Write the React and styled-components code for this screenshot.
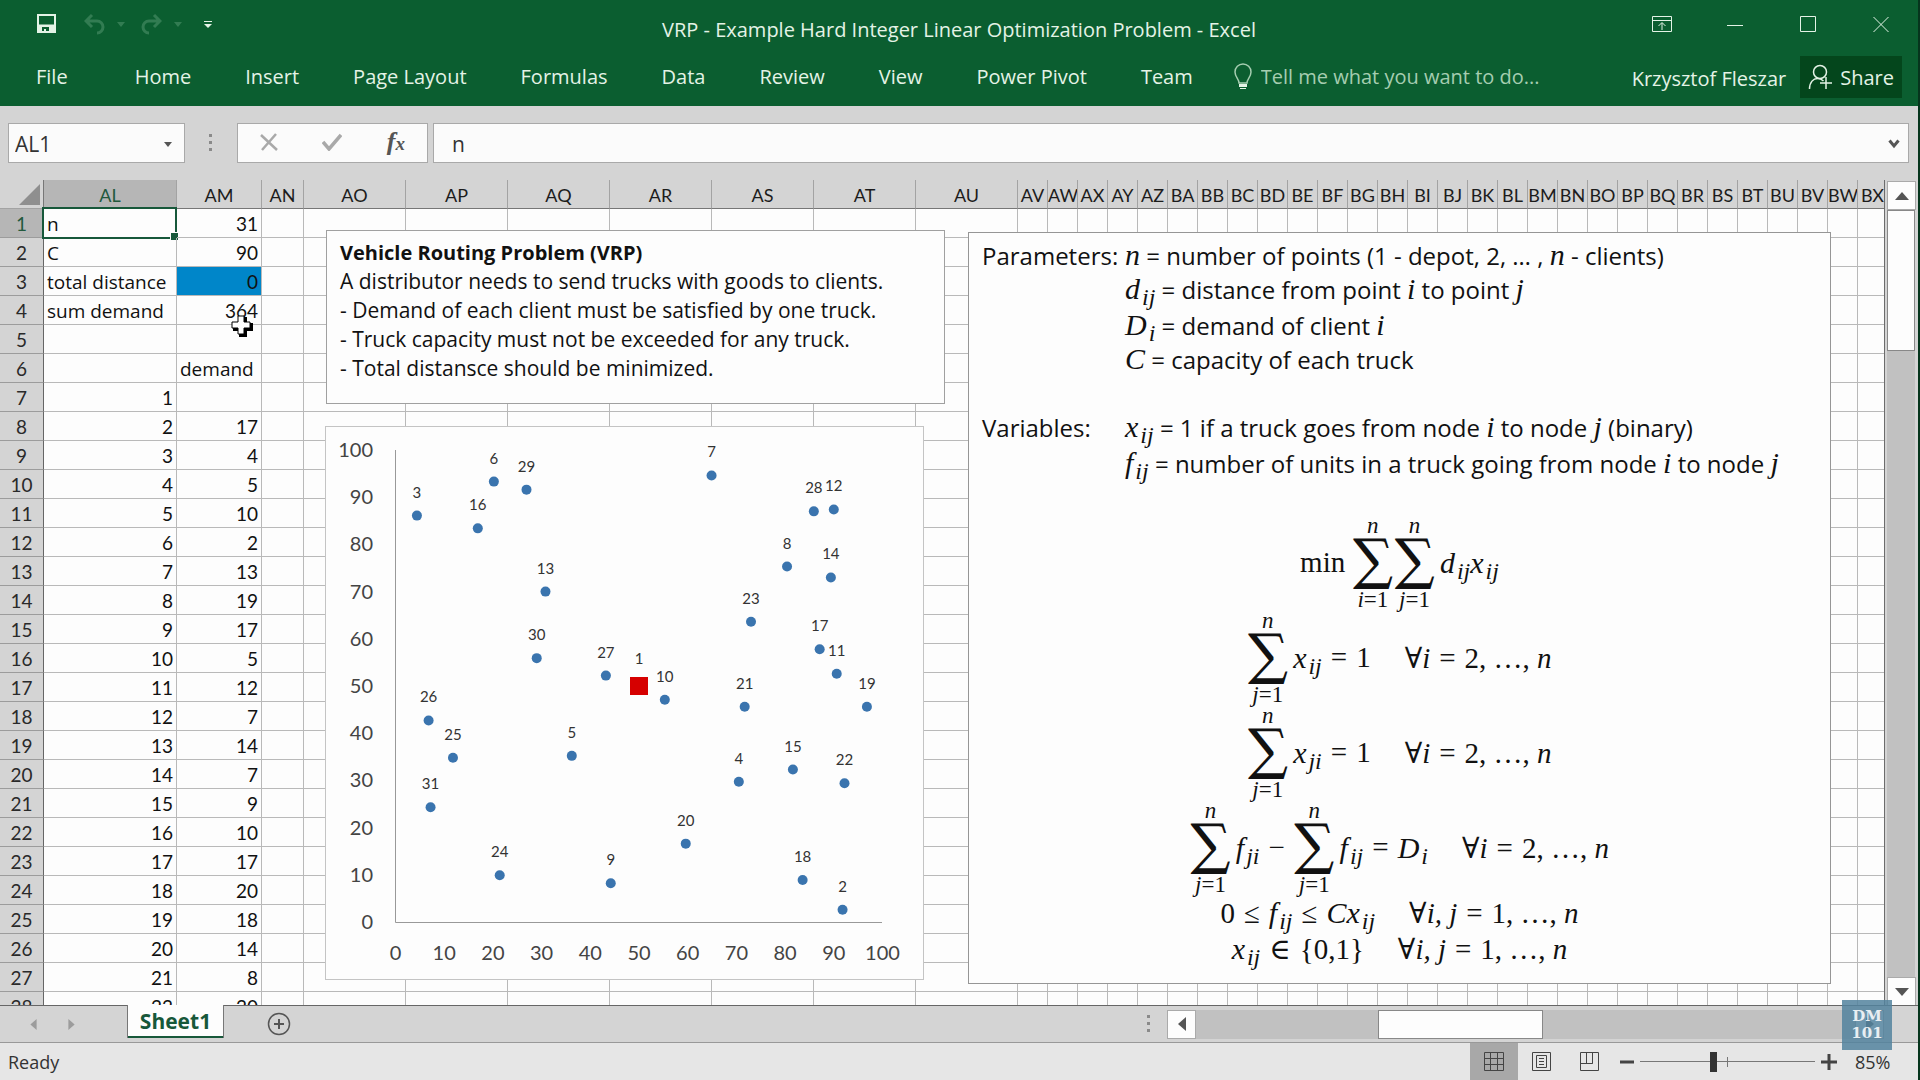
import React, { useState } from 'react';
import styled, { createGlobalStyle } from 'styled-components';

const ui = `'Open Sans', 'Noto Sans', sans-serif`;
const cell = `Lato, 'Open Sans', sans-serif`;
const math = `'Liberation Serif', 'DejaVu Serif', serif`;

const Global = createGlobalStyle`
  * {
    box-sizing: border-box;
  }
  body {
    margin: 0;
    overflow: hidden;
    font-family: ${ui};
  }
  button, input {
    font: inherit;
    color: inherit;
    border: none;
    background: none;
    padding: 0;
    margin: 0;
  }
  button {
    cursor: pointer;
  }
`;

const Window = styled.div`
  display: flex;
  flex-direction: column;
  height: 100vh;
  background: #d4d4d4;
  border-right: 2px solid #06351d;
`;

const Header = styled.header`
  height: 106px;
  background: #0b5e30;
  color: #e4f3e6;
  font-size: 20px;
`;

const TitleBar = styled.div`
  display: grid;
  grid-template-columns: 1fr auto 1fr;
  height: 56px;
`;

const QuickAccess = styled.div`
  display: flex;
  align-items: flex-start;
  padding: 13px 0 0 36px;
`;

const QuickButton = styled.button`
  display: flex;
  height: 22px;
  margin-right: ${(props) => props.$gap || 0}px;
  opacity: ${(props) => (props.disabled ? 0.25 : 1)};
`;

const DocTitle = styled.h1`
  margin: 0;
  padding-top: 15px;
  font-size: 20px;
  font-weight: 400;
  line-height: 30px;
`;

const WindowButtons = styled.div`
  display: flex;
  justify-content: flex-end;
  padding-right: 1px;
`;

const WindowButton = styled.button`
  display: flex;
  justify-content: center;
  width: 73px;
  height: 48px;
  padding-top: 16px;
`;

const Ribbon = styled.nav`
  display: flex;
  align-items: center;
  height: 42px;
  padding: 0 16px 0 9px;
`;

const RibbonTab = styled.button`
  padding: 0 ${(props) => (props.$file ? 40 : 27)}px 0 27px;
  line-height: 42px;
  white-space: nowrap;
`;

const TellMe = styled.label`
  display: flex;
  flex: 1;
  align-items: center;
  gap: 8px;
  padding-left: 13px;

  input {
    flex: 1;
    min-width: 0;
    line-height: 28px;
    outline: none;
  }
  input::placeholder {
    color: #a5cdb0;
    opacity: 1;
  }
`;

const User = styled.span`
  padding: 2px 14px 0 0;
  white-space: nowrap;
`;

const Share = styled.button`
  display: flex;
  align-items: center;
  gap: 8px;
  height: 42px;
  padding: 0 8px;
  background: #04461c;
`;

const FormulaBar = styled.div`
  display: flex;
  height: 74px;
  padding: 17px 9px 0 8px;
  color: #333;
  font-size: 21px;
`;

const BarBox = styled.div`
  display: flex;
  align-items: center;
  height: 40px;
  background: #fbfbfb;
  border: 1px solid #a9a9a9;
`;

const NameBox = styled(BarBox)`
  width: 177px;
  padding: 2px 12px 0 6px;

  input {
    flex: 1;
    min-width: 0;
    outline: none;
  }
`;

const BarDots = styled.div`
  display: flex;
  justify-content: center;
  align-items: center;
  width: 52px;
  height: 40px;
`;

const FxBox = styled(BarBox)`
  justify-content: space-between;
  width: 191px;
  margin-right: 5px;
  padding: 0 22px;
`;

const FormulaBox = styled(BarBox)`
  flex: 1;
  padding: 2px 8px 0 18px;

  input {
    flex: 1;
    outline: none;
  }
`;

const FxButton = styled.button`
  color: #555;
  font-family: ${math};
  font-size: 26px;
  font-style: italic;
  font-weight: 700;
  line-height: 30px;

  small {
    font-size: 19px;
  }
`;

const Body = styled.main`
  display: flex;
  flex: 1;
  min-height: 0;
`;

const Sheet = styled.div`
  position: relative;
  flex: 1;
  min-width: 0;
  overflow: hidden;
  background: #fdfdfd;
`;

const Grid = styled.table`
  width: 1888px;
  table-layout: fixed;
  border-collapse: separate;
  border-spacing: 0;
  color: #111;
  font-family: ${cell};
  font-size: 19px;
`;

const ColHead = styled.th`
  height: 29px;
  padding: 3px 0 0;
  overflow: hidden;
  background: ${(props) => (props.$active ? '#b6b6b6' : '#d4d4d4')};
  border-right: 1px solid #a3a3a3;
  border-bottom: 1px solid #777;
  color: ${(props) => (props.$active ? '#22593d' : '#1c1c1c')};
  font-size: 18px;
  font-weight: 400;
  line-height: 25px;
  white-space: nowrap;
`;

const Corner = styled.td`
  height: 29px;
  padding: 0 3px 3px 0;
  background: #d4d4d4;
  border-right: 1px solid #777;
  border-bottom: 1px solid #a3a3a3;
  vertical-align: bottom;

  svg {
    display: block;
    margin-left: auto;
  }
`;

const RowHead = styled.th`
  height: 29px;
  padding: 2px 0 0;
  background: ${(props) => (props.$active ? '#b6b6b6' : '#d4d4d4')};
  border-right: 1px solid #666;
  border-bottom: 1px solid #9c9c9c;
  color: ${(props) => (props.$active ? '#22593d' : '#2a2a2a')};
  font-weight: 400;
  line-height: 26px;
`;

const Cell = styled.td`
  position: relative;
  height: 29px;
  padding: 2px 3px 0;
  background: ${(props) => (props.$fill ? '#0086c9' : 'transparent')};
  border-right: 1px solid #b9b9b9;
  border-bottom: 1px solid #b9b9b9;
  font-family: ${(props) => (props.$text ? ui : 'inherit')};
  text-align: ${(props) => (props.$text ? 'left' : 'right')};
  line-height: 26px;
  white-space: nowrap;
`;

const Selection = styled.div`
  position: absolute;
  inset: -2px -1px -2px -2px;
  border: 2px solid #17583a;

  &::after {
    content: '';
    position: absolute;
    right: -3px;
    bottom: -3px;
    width: 7px;
    height: 7px;
    background: #17583a;
    border: solid #fdfdfd;
    border-width: 1px 0 0 1px;
  }
`;

const Cursor = styled.svg`
  position: absolute;
  left: 230px;
  top: 134px;
`;

/* objects floating over the grid */
const Floating = styled.section`
  position: absolute;
  left: ${(props) => props.$x}px;
  top: ${(props) => props.$y}px;
  background: #fdfdfd;
  border: 1px solid ${(props) => props.$line || '#a0a0a0'};
`;

const Note = styled(Floating)`
  width: 619px;
  height: 174px;
  padding: 7px 13px;
  color: #111;
  font-size: 21px;
  line-height: 29px;

  h2,
  p {
    margin: 0;
    white-space: nowrap;
  }
  h2 {
    font-size: 20px;
  }
  p {
    font-size: inherit;
  }
`;

const Chart = styled.svg`
  display: block;
  font-family: ${cell};
`;

const Model = styled(Floating)`
  width: 863px;
  height: 752px;
  padding: 6px 13px;
  color: #111;
  font-size: 24px;
`;

const Definitions = styled.div`
  display: grid;
  grid-template-columns: 143px 1fr;
  padding-bottom: 34px;
`;

const Def = styled.p`
  grid-column: 2;
  margin: 0;
  padding-bottom: ${(props) => (props.$deep ? 2 : 0)}px;
  line-height: 34px;
  white-space: nowrap;
`;

const DefLabel = styled.h3`
  grid-column: 1;
  margin: 0;
  font-size: inherit;
  font-weight: 400;
  line-height: 34px;
`;

const Var = styled.i`
  font-family: ${math};
  font-size: 30px;
  line-height: 1;

  sub {
    margin-left: 2px;
    font-size: 24px;
    line-height: 0;
    vertical-align: -6px;
  }
`;

const Equation = styled.div`
  display: flex;
  justify-content: center;
  align-items: center;
  height: ${(props) => (props.$sum ? 95 : 36)}px;
  font-family: ${math};
  font-size: 29px;
  white-space: pre;
`;

const Op = styled.span`
  margin: 0 9px;
`;

const ForAll = styled.span`
  margin-left: 34px;
`;

/* the sign has wide side bearings, so the boxes are pulled together */
const SumBox = styled.span`
  display: inline-flex;
  flex-direction: column;
  align-items: center;
  margin: 0 2px 0 -3px;

  & + & {
    margin-left: -7px;
  }
`;

const Limit = styled.span`
  font-size: 23px;
  line-height: 20px;
`;

const SumSign = styled.span`
  font-family: 'DejaVu Math TeX Gyre', 'DejaVu Serif', serif;
  font-size: 48px;
  line-height: 54px;
`;

const VScroll = styled.div`
  display: flex;
  flex-direction: column;
  width: 34px;
  margin-bottom: -1px;
  padding: 1px 3px 0 2px;
  border-left: 1px solid #6c6c6c;
`;

const ScrollButton = styled.button`
  display: flex;
  flex: none;
  justify-content: center;
  align-items: center;
  width: 29px;
  height: 29px;
  background: #fdfdfd;
  border: 1px solid #aaa;
`;

const VTrack = styled.div`
  flex: 1;
  background: #c1c1c1;
`;

const VThumb = styled.div`
  height: 141px;
  background: #fdfdfd;
  border: 1px solid #888;
`;

const TabBar = styled.div`
  position: relative;
  display: flex;
  height: 38px;
  border-top: 1px solid #666;
  border-bottom: 1px solid #999;
`;

const TabNav = styled.div`
  display: flex;
  align-items: center;
  gap: 27px;
  width: 127px;
  padding-left: 28px;

  button {
    display: flex;
  }
`;

const SheetTab = styled.button`
  width: 97px;
  height: 33px;
  margin-top: -1px;
  padding-bottom: 2px;
  background: #fdfdfd;
  border: solid #777;
  border-width: 0 1px;
  box-shadow: inset 0 -2px #17583a;
  color: #17583a;
  font-size: 21px;
  font-weight: 700;
  line-height: 28px;
`;

const AddSheet = styled.button`
  display: flex;
  align-items: center;
  margin-left: 43px;
`;

const HScroll = styled.div`
  display: flex;
  align-items: center;
  width: 737px;
  margin: 0 34px 0 auto;
`;

const BarSpace = styled.span`
  width: 16px;
`;

const HTrack = styled.div`
  display: flex;
  flex: 1;
  height: 29px;
  padding-left: 182px;
  background: #c1c1c1;
`;

const HThumb = styled.div`
  width: 165px;
  background: #fdfdfd;
  border: 1px solid #888;
`;

const Watermark = styled.div`
  position: absolute;
  right: 26px;
  top: -6px;
  width: 50px;
  height: 50px;
  padding-top: 8px;
  background: rgba(82, 130, 158, 0.85);
  color: #e8eef2;
  font-family: 'DejaVu Serif', serif;
  font-size: 15px;
  font-weight: 700;
  line-height: 17px;
  text-align: center;
`;

const StatusBar = styled.footer`
  display: flex;
  align-items: center;
  height: 37px;
  padding: 0 25px 0 8px;
  background: #e6e6e6;
  color: #333;
  font-size: 18px;
`;

const Views = styled.div`
  display: flex;
  align-self: stretch;
  margin-left: auto;
`;

const ViewButton = styled.button`
  display: flex;
  justify-content: center;
  align-items: center;
  width: 48px;
  background: ${(props) => (props.$active ? '#a8a8a8' : 'transparent')};
`;

const ZoomButton = styled.button`
  display: flex;
`;

const ZoomRange = styled.input`
  appearance: none;
  width: 175px;
  height: 22px;
  margin: 0 6px;
  background: linear-gradient(#777, #777) 50% 50% / 1px 10px no-repeat,
    linear-gradient(#777, #777) 0 50% / 100% 1px no-repeat;

  &::-webkit-slider-thumb {
    appearance: none;
    width: 7px;
    height: 20px;
    background: #333;
  }
`;

const ZoomValue = styled.output`
  width: 38px;
  margin-left: 18px;
`;

const tabs = [
  'File',
  'Home',
  'Insert',
  'Page Layout',
  'Formulas',
  'Data',
  'Review',
  'View',
  'Power Pivot',
  'Team',
];

const wideCols = ['AO', 'AP', 'AQ', 'AR', 'AS', 'AT', 'AU'];
const narrowCols = [
  ...[...'VWXYZ'].map((c) => 'A' + c),
  ...[...'ABCDEFGHIJKLMNOPQRSTUVWX'].map((c) => 'B' + c),
];
const columns = [
  { name: 'AL', width: 133 },
  { name: 'AM', width: 85 },
  { name: 'AN', width: 42 },
  ...wideCols.map((name) => ({ name, width: 102 })),
  ...narrowCols.map((name) => ({ name, width: 30 })),
];

const demands = [
  '', 17, 4, 5, 10, 2, 13, 19, 17, 5, 12, 7, 14, 7, 9, 10, 17, 20, 18, 14, 8,
  20,
];
const rows = [
  ['n', 31],
  ['C', 90],
  ['total distance', 0],
  ['sum demand', 364],
  ['', ''],
  ['', 'demand'],
  ...demands.map((demand, i) => [i + 1, demand]),
];

const points = [
  [1, 50, 50],
  [2, 91.8, 2.6],
  [3, 4.4, 86.1],
  [4, 70.5, 29.7],
  [5, 36.2, 35.2],
  [6, 20.2, 93.3],
  [7, 64.9, 94.6],
  [8, 80.4, 75.3],
  [9, 44.2, 8.2],
  [10, 55.3, 47.1],
  [11, 90.6, 52.6],
  [12, 90, 87.4],
  [13, 30.8, 70],
  [14, 89.4, 73],
  [15, 81.6, 32.3],
  [16, 16.9, 83.4],
  [17, 87.1, 57.8],
  [18, 83.6, 8.9],
  [19, 96.8, 45.6],
  [20, 59.6, 16.6],
  [21, 71.7, 45.6],
  [22, 92.2, 29.4],
  [23, 73, 63.6],
  [24, 21.4, 9.9],
  [25, 11.8, 34.8],
  [26, 6.8, 42.7],
  [27, 43.2, 52.2],
  [28, 85.9, 87],
  [29, 26.9, 91.6],
  [30, 29, 55.9],
  [31, 7.2, 24.3],
];
const ticks = [0, 10, 20, 30, 40, 50, 60, 70, 80, 90, 100];

const px = (x) => 69.5 + x * 4.87;
const py = (y) => 495 - y * 4.72;

function Caret({ color = '#e4f3e6', size = 8 }) {
  return (
    <svg width={size} height="22" viewBox={`0 0 ${size} 22`}>
      <path d={`M0 9h${size}l-${size / 2} 5z`} fill={color} />
    </svg>
  );
}

function Arrow({ dir, color = '#555', size = 14 }) {
  const turn = { up: 0, right: 90, down: 180, left: 270 }[dir];
  return (
    <svg width={size} height={size} viewBox="0 0 14 14">
      <path
        d="M0 11L7 3l7 8z"
        fill={color}
        transform={`rotate(${turn} 7 7)`}
      />
    </svg>
  );
}

function Dots() {
  return (
    <svg width="4" height="18" viewBox="0 0 4 18" fill="#8a8a8a">
      <path d="M0 0h3v3H0zM0 7h3v3H0zM0 14h3v3H0z" />
    </svg>
  );
}

function ScatterChart() {
  return (
    <Chart width="597" height="552" viewBox="0 0 597 552">
      <path d="M69.500 23V495.500H556" fill="none" stroke="#999" />
      <g fill="#444" fontSize="20">
        {ticks.map((t) => (
          <g key={t}>
            <text x="47" y={py(t) + 7} textAnchor="end">
              {t}
            </text>
            <text x={px(t)} y="533" textAnchor="middle">
              {t}
            </text>
          </g>
        ))}
      </g>
      {points.map(([id, x, y]) => (
        <g key={id}>
          {id === 1 ? (
            <rect x={px(x) - 9} y={py(y) - 9} width="18" height="18" fill="#d60000" />
          ) : (
            <circle cx={px(x)} cy={py(y)} r="5" fill="#3a74ae" />
          )}
          <text
            x={px(x)}
            y={py(y) - (id === 1 ? 22 : 18)}
            textAnchor="middle"
            fontSize="15"
            fill="#333"
          >
            {id}
          </text>
        </g>
      ))}
    </Chart>
  );
}

function V({ name, sub }) {
  return (
    <Var>
      {name}
      {sub && <sub>{sub}</sub>}
    </Var>
  );
}

function Sum({ index }) {
  return (
    <SumBox>
      <Limit>
        <i>n</i>
      </Limit>
      <SumSign>∑</SumSign>
      <Limit>
        <i>{index}</i>=1
      </Limit>
    </SumBox>
  );
}

function Range({ vars, from }) {
  return (
    <ForAll>
      ∀<i>{vars}</i>
      <Op>=</Op>
      {from}, …, <i>n</i>
    </ForAll>
  );
}

function ModelBox() {
  return (
    <Model $x={968} $y={52} $line="#969696">
      <Definitions>
        <DefLabel>Parameters:</DefLabel>
        <Def>
          <V name="n" /> = number of points (1 - depot, 2, … , <V name="n" /> -
          clients)
        </Def>
        <Def $deep>
          <V name="d" sub="ij" /> = distance from point <V name="i" /> to point{' '}
          <V name="j" />
        </Def>
        <Def>
          <V name="D" sub="i" /> = demand of client <V name="i" />
        </Def>
        <Def>
          <V name="C" /> = capacity of each truck
        </Def>
      </Definitions>
      <Definitions>
        <DefLabel>Variables:</DefLabel>
        <Def $deep>
          <V name="x" sub="ij" /> = 1 if a truck goes from node <V name="i" /> to
          node <V name="j" /> (binary)
        </Def>
        <Def>
          <V name="f" sub="ij" /> = number of units in a truck going from node{' '}
          <V name="i" /> to node <V name="j" />
        </Def>
      </Definitions>
      <Equation $sum>
        {'min '}
        <Sum index="i" />
        <Sum index="j" />
        <V name="d" sub="ij" />
        <V name="x" sub="ij" />
      </Equation>
      <Equation $sum>
        <Sum index="j" />
        <V name="x" sub="ij" />
        <Op>=</Op>1
        <Range vars="i" from="2" />
      </Equation>
      <Equation $sum>
        <Sum index="j" />
        <V name="x" sub="ji" />
        <Op>=</Op>1
        <Range vars="i" from="2" />
      </Equation>
      <Equation $sum>
        <Sum index="j" />
        <V name="f" sub="ji" />
        <Op>−</Op>
        <Sum index="j" />
        <V name="f" sub="ij" />
        <Op>=</Op>
        <V name="D" sub="i" />
        <Range vars="i" from="2" />
      </Equation>
      <Equation>
        0<Op>≤</Op>
        <V name="f" sub="ij" />
        <Op>≤</Op>
        <V name="C" />
        <V name="x" sub="ij" />
        <Range vars="i, j" from="1" />
      </Equation>
      <Equation>
        <V name="x" sub="ij" />
        <Op>∈</Op>
        {'{0,1}'}
        <Range vars="i, j" from="1" />
      </Equation>
    </Model>
  );
}

function App() {
  const [formula, setFormula] = useState('n');
  const [zoom, setZoom] = useState(85);

  return (
    <Window>
      <Global />
      <Header>
        <TitleBar>
          <QuickAccess>
            <QuickButton $gap={27} aria-label="Save">
              <svg width="21" height="22" viewBox="0 0 21 22">
                <path
                  d="M2 2h17v17H2zM2 12.500h17"
                  fill="none"
                  stroke="#e4f3e6"
                  strokeWidth="2"
                />
                <path
                  fillRule="evenodd"
                  d="M1 12h19v8H1zM6 14v5h2v-3h2v3h3v-5z"
                  fill="#e4f3e6"
                />
              </svg>
            </QuickButton>
            <QuickButton $gap={12} disabled aria-label="Undo">
              <svg width="21" height="22" viewBox="0 0 21 22">
                <path
                  d="M8 2L2 8l6 6M2 8h11a6 6 0 0 1 0 12"
                  fill="none"
                  stroke="#a8d8b8"
                  strokeWidth="3"
                />
              </svg>
            </QuickButton>
            <QuickButton $gap={16} disabled aria-label="Undo list">
              <Caret color="#a8d8b8" />
            </QuickButton>
            <QuickButton $gap={12} disabled aria-label="Redo">
              <svg width="21" height="22" viewBox="0 0 21 22">
                <path
                  d="M13 2l6 6-6 6M19 8H8a6 6 0 0 0 0 12"
                  fill="none"
                  stroke="#a8d8b8"
                  strokeWidth="3"
                />
              </svg>
            </QuickButton>
            <QuickButton $gap={22} disabled aria-label="Redo list">
              <Caret color="#a8d8b8" />
            </QuickButton>
            <QuickButton aria-label="Customize toolbar">
              <svg width="8" height="22" viewBox="0 0 8 22" fill="#e4f3e6">
                <path d="M0 8h8v1H0zM0 11h8l-4 4z" />
              </svg>
            </QuickButton>
          </QuickAccess>
          <DocTitle>
            VRP - Example Hard Integer Linear Optimization Problem - Excel
          </DocTitle>
          <WindowButtons>
            <WindowButton aria-label="Ribbon display options">
              <svg width="20" height="17" fill="none" stroke="#e4f3e6">
                <path d="M.5.5h19v15H.5zM.5 4.500h19M10 14V7M6.500 10L10 6.500l3.500 3.500" />
              </svg>
            </WindowButton>
            <WindowButton aria-label="Minimize">
              <svg width="16" height="17" fill="none" stroke="#e4f3e6">
                <path d="M0 9.500h16" />
              </svg>
            </WindowButton>
            <WindowButton aria-label="Maximize">
              <svg width="16" height="17" fill="none" stroke="#e4f3e6">
                <path d="M.5.5h15v15H.5z" />
              </svg>
            </WindowButton>
            <WindowButton aria-label="Close">
              <svg width="16" height="17" fill="none" stroke="#e4f3e6">
                <path d="M.5 1l15 15M15.500 1l-15 15" />
              </svg>
            </WindowButton>
          </WindowButtons>
        </TitleBar>
        <Ribbon>
          {tabs.map((tab) => (
            <RibbonTab key={tab} $file={tab === 'File'}>
              {tab}
            </RibbonTab>
          ))}
          <TellMe>
            <svg width="20" height="28" viewBox="0 0 20 28">
              <path
                d="M6 20c0-4-4-6-4-11a8 8 0 0 1 16 0c0 5-4 7-4 11z"
                fill="none"
                stroke="#a5cdb0"
                strokeWidth="1.500"
              />
              <path d="M6 21h8v3H6zM7 25h6v1H7z" fill="#e4f3e6" />
            </svg>
            <input
              aria-label="Tell me"
              placeholder="Tell me what you want to do..."
            />
          </TellMe>
          <User>Krzysztof Fleszar</User>
          <Share>
            <svg width="24" height="26" fill="none" stroke="#e4f3e6" strokeWidth="1.500">
              <circle cx="12" cy="8" r="6.500" />
              <path d="M1.500 25c0-7 4-10.500 8-10.500 3 0 4.500 1 6 2.500M18 13v12M12 19h12" />
            </svg>
            Share
          </Share>
        </Ribbon>
      </Header>

      <FormulaBar>
        <NameBox>
          <input aria-label="Name box" defaultValue="AL1" />
          <Caret color="#555" />
        </NameBox>
        <BarDots>
          <Dots />
        </BarDots>
        <FxBox>
          <button aria-label="Cancel">
            <svg width="18" height="18" viewBox="0 0 18 18">
              <path d="M1 2l16 15M16 1L2 17" stroke="#a9a9a9" strokeWidth="2.500" />
            </svg>
          </button>
          <button aria-label="Enter">
            <svg width="20" height="18" viewBox="0 0 20 18">
              <path
                d="M1 9l6 7L19 2"
                fill="none"
                stroke="#a9a9a9"
                strokeWidth="3.500"
              />
            </svg>
          </button>
          <FxButton aria-label="Insert function">
            f<small>x</small>
          </FxButton>
        </FxBox>
        <FormulaBox>
          <input
            aria-label="Formula"
            value={formula}
            onChange={(e) => setFormula(e.target.value)}
          />
          <svg width="12" height="10" viewBox="0 0 12 10">
            <path
              d="M1.500 1.500L6 7l4.500-5.500"
              fill="none"
              stroke="#555"
              strokeWidth="3"
            />
          </svg>
        </FormulaBox>
      </FormulaBar>

      <Body>
        <Sheet>
          <Grid>
            <colgroup>
              <col width="44" />
              {columns.map((col) => (
                <col key={col.name} width={col.width} />
              ))}
            </colgroup>
            <thead>
              <tr>
                <Corner>
                  <svg width="21" height="21">
                    <path d="M21 0v21H0z" fill="#8f8f8f" />
                  </svg>
                </Corner>
                {columns.map((col) => (
                  <ColHead key={col.name} $active={col.name === 'AL'}>
                    {col.name}
                  </ColHead>
                ))}
              </tr>
            </thead>
            <tbody>
              {rows.map(([a, b], i) => (
                <tr key={i}>
                  <RowHead $active={i === 0}>{i + 1}</RowHead>
                  <Cell $text={typeof a === 'string'}>
                    {a}
                    {i === 0 && <Selection />}
                  </Cell>
                  <Cell $text={typeof b === 'string'} $fill={i === 2}>
                    {b}
                  </Cell>
                  {columns.slice(2).map((col) => (
                    <Cell key={col.name} />
                  ))}
                </tr>
              ))}
            </tbody>
          </Grid>

          <Note $x={326} $y={50}>
            <h2>Vehicle Routing Problem (VRP)</h2>
            <p>A distributor needs to send trucks with goods to clients.</p>
            <p>- Demand of each client must be satisfied by one truck.</p>
            <p>- Truck capacity must not be exceeded for any truck.</p>
            <p>- Total distansce should be minimized.</p>
          </Note>
          <Floating $x={325} $y={246} $line="#c4c4c4">
            <ScatterChart />
          </Floating>
          <ModelBox />

          <Cursor width="24" height="24" viewBox="0 0 24 24">
            <path d="M9 3h8v6h6v8h-6v6H9v-6H3V9h6z" fill="#000" />
            <path
              d="M8 2h6v6h6v6h-6v6H8v-6H2V8h6z"
              fill="#fff"
              stroke="#000"
            />
          </Cursor>
        </Sheet>
        <VScroll>
          <ScrollButton aria-label="Scroll up">
            <Arrow dir="up" />
          </ScrollButton>
          <VTrack>
            <VThumb />
          </VTrack>
          <ScrollButton aria-label="Scroll down">
            <Arrow dir="down" />
          </ScrollButton>
        </VScroll>
      </Body>

      <TabBar>
        <TabNav>
          <button aria-label="Previous sheet">
            <Arrow dir="left" color="#9c9c9c" size={11} />
          </button>
          <button aria-label="Next sheet">
            <Arrow dir="right" color="#9c9c9c" size={11} />
          </button>
        </TabNav>
        <SheetTab>Sheet1</SheetTab>
        <AddSheet aria-label="New sheet">
          <svg width="24" height="24" fill="none" stroke="#555">
            <circle cx="12" cy="12" r="10.500" strokeWidth="1.500" />
            <path d="M12 7v10M7 12h10" strokeWidth="2" />
          </svg>
        </AddSheet>
        <HScroll>
          <Dots />
          <BarSpace />
          <ScrollButton aria-label="Scroll left">
            <Arrow dir="left" />
          </ScrollButton>
          <HTrack>
            <HThumb />
          </HTrack>
          <ScrollButton aria-label="Scroll right">
            <Arrow dir="right" />
          </ScrollButton>
        </HScroll>
        <Watermark>
          DM
          <br />
          101
        </Watermark>
      </TabBar>

      <StatusBar>
        Ready
        <Views>
          <ViewButton $active aria-label="Normal">
            <svg width="20" height="20" fill="none" stroke="#444">
              <path d="M.5.5h19v18H.5zM.5 6.500h19M.5 12.500h19M6.500.5v18M13.500.5v18" />
            </svg>
          </ViewButton>
          <ViewButton aria-label="Page layout">
            <svg width="20" height="20" fill="none" stroke="#444">
              <path d="M.5.5h18v18H.5zM4.500 3.500h10v12h-10zM7 6.500h5M7 9.500h5M7 12.500h5" />
            </svg>
          </ViewButton>
          <ViewButton aria-label="Page break preview">
            <svg width="20" height="20" fill="none" stroke="#444">
              <path d="M.5.5h18v18H.5zM6.500.5v11h6V.5M.5 11.500h12" />
            </svg>
          </ViewButton>
        </Views>
        <ZoomButton aria-label="Zoom out">
          <svg width="20" height="16">
            <path d="M6 8h14" stroke="#444" strokeWidth="3" />
          </svg>
        </ZoomButton>
        <ZoomRange
          type="range"
          aria-label="Zoom"
          min="10"
          max="190"
          value={zoom}
          onChange={(e) => setZoom(Number(e.target.value))}
        />
        <ZoomButton aria-label="Zoom in">
          <svg width="16" height="16">
            <path d="M0 8h16M8 0v16" stroke="#444" strokeWidth="3" />
          </svg>
        </ZoomButton>
        <ZoomValue>{zoom}%</ZoomValue>
      </StatusBar>
    </Window>
  );
}

export default App;
